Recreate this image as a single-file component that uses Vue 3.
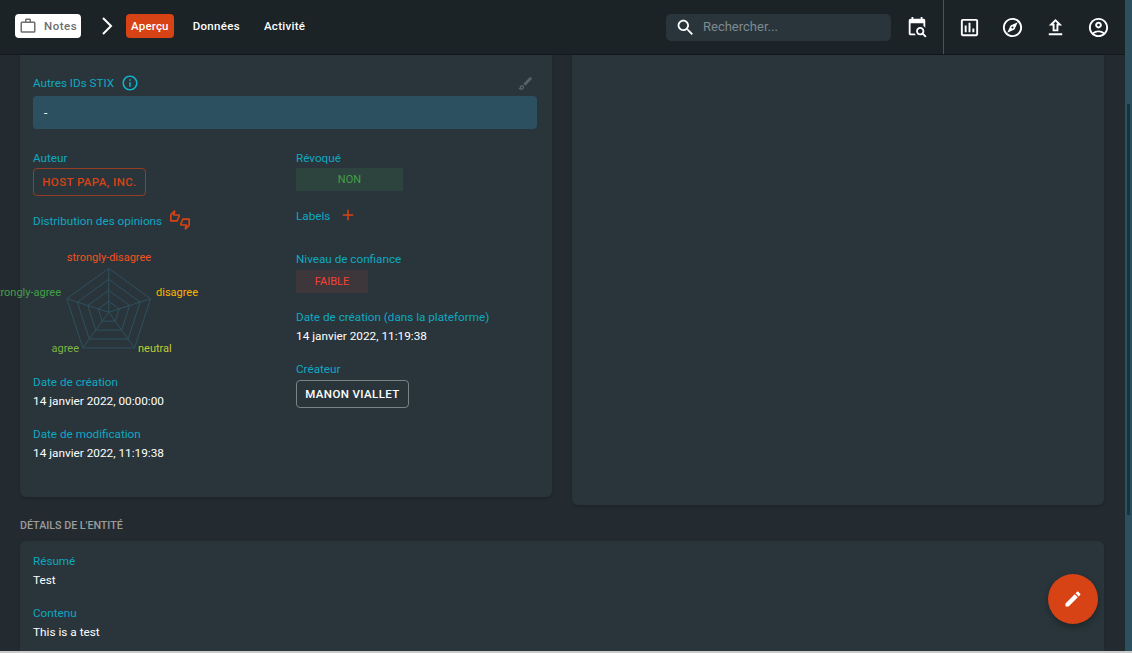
<script setup lang="ts">
const cx = 75.7
const cy = 72.3
const radius = 44

function point(axis: number, r: number): string {
  const angle = (-90 + axis * 72) * (Math.PI / 180)
  return `${(cx + r * Math.cos(angle)).toFixed(1)},${(cy + r * Math.sin(angle)).toFixed(1)}`
}

const rings = [0.25, 0.5, 0.75, 1].map((f) =>
  [0, 1, 2, 3, 4].map((a) => point(a, radius * f)).join(' ')
)
const spokes = [0, 1, 2, 3, 4].map((a) => point(a, radius).split(','))

const radarLabels = [
  { text: 'strongly-disagree', x: 76, y: 21, anchor: 'middle', color: '#f4511e' },
  { text: 'disagree', x: 123, y: 56, anchor: 'start', color: '#ffb300' },
  { text: 'neutral', x: 105, y: 112, anchor: 'start', color: '#c0ca33' },
  { text: 'agree', x: 46, y: 112, anchor: 'end', color: '#7cb342' },
  { text: 'strongly-agree', x: 28, y: 56, anchor: 'end', color: '#43a047' },
]
</script>

<template>
  <div class="page">
    <div class="viewport">
      <header class="topbar">
        <div class="crumb">
          <svg class="crumb-icon" viewBox="0 0 24 24"><path d="M14 6V4h-4v2h4zM4 8v11h16V8H4zm16-2c1.11 0 2 .89 2 2v11c0 1.11-.89 2-2 2H4c-1.11 0-2-.89-2-2l.01-11c0-1.11.88-2 1.99-2h4V4c0-1.11.89-2 2-2h4c1.11 0 2 .89 2 2v2h4z" /></svg>
          <span>Notes</span>
        </div>
        <svg class="chevron" viewBox="0 0 12 20"><polyline points="2,2 10,10 2,18" /></svg>
        <nav class="tabs">
          <a class="tab active">Aperçu</a>
          <a class="tab">Données</a>
          <a class="tab">Activité</a>
        </nav>
        <div class="search">
          <svg class="search-icon" viewBox="0 0 24 24"><path d="M15.5 14h-.79l-.28-.27C15.41 12.59 16 11.11 16 9.5 16 5.91 13.09 3 9.5 3S3 5.91 3 9.5 5.91 16 9.5 16c1.61 0 3.09-.59 4.23-1.57l.27.28v.79l5 4.99L20.49 19l-4.99-5zm-6 0C7.01 14 5 11.99 5 9.5S7.01 5 9.5 5 14 7.01 14 9.5 11.99 14 9.5 14z" /></svg>
          <input type="text" placeholder="Rechercher..." />
        </div>
        <svg class="bar-icon calendar" viewBox="0 0 24 24"><path d="M15.5 12C18 12 20 14 20 16.5C20 17.38 19.75 18.2 19.31 18.9L22.39 22L21 23.39L17.88 20.32C17.19 20.75 16.37 21 15.5 21C13 21 11 19 11 16.5C11 14 13 12 15.5 12M15.5 14C14.12 14 13 15.12 13 16.5C13 17.88 14.12 19 15.5 19C16.88 19 18 17.88 18 16.5C18 15.12 16.88 14 15.5 14M19 8H5V19H9.5C9.81 19.79 10.28 20.5 10.87 21H5C3.89 21 3 20.1 3 19V5C3 3.89 3.89 3 5 3H6V1H8V3H16V1H18V3H19C20.1 3 21 3.89 21 5V13.03C20.5 12.23 19.81 11.54 19 11V8Z" /></svg>
        <div class="bar-divider"></div>
        <div class="bar-actions">
          <svg class="bar-icon" viewBox="0 0 24 24"><path d="M19 3H5c-1.1 0-2 .9-2 2v14c0 1.1.9 2 2 2h14c1.1 0 2-.9 2-2V5c0-1.1-.9-2-2-2zm0 16H5V5h14v14zM7 10h2v7H7zm4-3h2v10h-2zm4 6h2v4h-2z" /></svg>
          <svg class="bar-icon" viewBox="0 0 24 24"><path d="M12 2C6.48 2 2 6.48 2 12s4.48 10 10 10 10-4.48 10-10S17.52 2 12 2zm0 18c-4.41 0-8-3.59-8-8s3.59-8 8-8 8 3.59 8 8-3.59 8-8 8zm-5.5-2.5l7.51-3.49L17.5 6.5 9.99 9.99 6.5 17.5zm5.5-6.6c.61 0 1.1.49 1.1 1.1s-.49 1.1-1.1 1.1-1.1-.49-1.1-1.1.49-1.1 1.1-1.1z" /></svg>
          <svg class="bar-icon" viewBox="0 0 24 24"><path d="M9 16h6v-6h4l-7-7-7 7h4zm3-10.17L14.17 8H13v6h-2V8H9.83L12 5.83zM5 18h14v2H5z" /></svg>
          <svg class="bar-icon" viewBox="0 0 24 24"><path d="M12 2C6.48 2 2 6.48 2 12s4.48 10 10 10 10-4.48 10-10S17.52 2 12 2zM7.35 18.5C8.66 17.56 10.26 17 12 17s3.34.56 4.65 1.5c-1.31.94-2.91 1.5-4.65 1.5s-3.34-.56-4.65-1.5zm10.79-1.38C16.45 15.8 14.32 15 12 15s-4.45.8-6.14 2.12C4.7 15.73 4 13.95 4 12c0-4.42 3.58-8 8-8s8 3.58 8 8c0 1.95-.7 3.73-1.86 5.12zM12 6c-1.93 0-3.5 1.57-3.5 3.5S10.07 13 12 13s3.5-1.57 3.5-3.5S13.93 6 12 6zm0 5c-.83 0-1.5-.67-1.5-1.5S11.17 8 12 8s1.5.67 1.5 1.5S12.83 11 12 11z" /></svg>
        </div>
      </header>

      <main class="content">
        <div class="overview">
          <section class="card card-left">
            <div class="label-row spread">
              <div class="label-row">
                <span class="label">Autres IDs STIX</span>
                <svg class="info" viewBox="0 0 24 24"><path d="M11 7h2v2h-2zm0 4h2v6h-2zm1-9C6.48 2 2 6.48 2 12s4.48 10 10 10 10-4.48 10-10S17.52 2 12 2zm0 18c-4.41 0-8-3.59-8-8s3.59-8 8-8 8 3.59 8 8-3.59 8-8 8z" /></svg>
              </div>
              <svg class="brush" viewBox="0 0 24 24"><path d="M7 16c.55 0 1 .45 1 1 0 1.1-.9 2-2 2-.17 0-.33-.02-.5-.05.31-.55.5-1.21.5-1.95 0-.55.45-1 1-1M18.67 3c-.26 0-.51.1-.71.29L9 12.25 11.75 15l8.96-8.96c.39-.39.39-1.02 0-1.41l-1.34-1.34c-.2-.2-.45-.29-.7-.29zM7 14c-1.66 0-3 1.34-3 3 0 1.31-1.16 2-2 2 .92 1.22 2.49 2 4 2 2.21 0 4-1.79 4-4 0-1.66-1.34-3-3-3z" /></svg>
            </div>
            <div class="stix-box">-</div>

            <div class="columns">
              <div class="column">
                <span class="label">Auteur</span>
                <span class="chip chip-author">HOST PAPA, INC.</span>

                <div class="label-row opinions">
                  <span class="label">Distribution des opinions</span>
                  <svg class="thumbs" viewBox="0 0 24 24"><path d="M12 6c0-.55-.45-1-1-1H5.82l.66-3.18.02-.23c0-.31-.13-.59-.33-.8L5.38 0 .44 4.94C.17 5.21 0 5.59 0 6v6.5c0 .83.67 1.5 1.5 1.5h6.75c.62 0 1.15-.38 1.38-.91l2.26-5.29c.07-.17.11-.36.11-.55V6zm-2 1.13L7.92 12H2V6.21l1.93-1.93L3.36 7H10v.13zM22.5 10h-6.75c-.62 0-1.15.38-1.38.91l-2.26 5.29c-.07.17-.11.36-.11.55V18c0 .55.45 1 1 1h5.18l-.66 3.18-.02.24c0 .31.13.59.33.8l.79.78 4.94-4.94c.27-.27.44-.65.44-1.06v-6.5c0-.83-.67-1.5-1.5-1.5zm-.5 7.79l-1.93 1.93.57-2.72H14v-.13L16.08 12H22v5.79z" /></svg>
                </div>

                <svg class="radar" width="180" height="135" viewBox="0 0 180 135">
                  <polygon v-for="(ring, i) in rings" :key="i" :points="ring" class="radar-line" />
                  <line
                    v-for="(s, i) in spokes"
                    :key="'s' + i"
                    :x1="cx"
                    :y1="cy"
                    :x2="s[0]"
                    :y2="s[1]"
                    class="radar-line"
                  />
                  <text
                    v-for="l in radarLabels"
                    :key="l.text"
                    :x="l.x"
                    :y="l.y"
                    :text-anchor="l.anchor"
                    :fill="l.color"
                    class="radar-text"
                  >{{ l.text }}</text>
                </svg>

                <span class="label">Date de création</span>
                <span class="value">14 janvier 2022, 00:00:00</span>
                <span class="label next">Date de modification</span>
                <span class="value">14 janvier 2022, 11:19:38</span>
              </div>

              <div class="column">
                <span class="label">Révoqué</span>
                <span class="chip chip-status chip-green">NON</span>

                <div class="label-row labels-row">
                  <span class="label">Labels</span>
                  <svg class="add" viewBox="0 0 24 24"><path d="M19 13h-6v6h-2v-6H5v-2h6V5h2v6h6v2z" /></svg>
                </div>

                <span class="label">Niveau de confiance</span>
                <span class="chip chip-status chip-red">FAIBLE</span>

                <span class="label after-chip">Date de création (dans la plateforme)</span>
                <span class="value">14 janvier 2022, 11:19:38</span>

                <span class="label next">Créateur</span>
                <span class="chip chip-creator">MANON VIALLET</span>
              </div>
            </div>
          </section>

          <section class="card card-right"></section>
        </div>

        <h2 class="section-title">Détails de l'entité</h2>
        <section class="card card-details">
          <span class="label">Résumé</span>
          <span class="value">Test</span>
          <span class="label next">Contenu</span>
          <span class="value">This is a test</span>
        </section>
      </main>

      <button type="button" class="fab" aria-label="Modifier">
        <svg viewBox="0 0 24 24"><path d="M3 17.25V21h3.75L17.81 9.94l-3.75-3.75L3 17.25zM20.71 7.04c.39-.39.39-1.02 0-1.41l-2.34-2.34c-.39-.39-1.02-.39-1.41 0l-1.83 1.83 3.75 3.75 1.83-1.83z" /></svg>
      </button>
    </div>

    <div class="scrollbar"><div class="scroll-thumb"></div></div>
  </div>
</template>

<style scoped>
.page {
  display: flex;
  height: 651px;
  overflow: hidden;
  background: #232b31;
  border-bottom: 2px solid #c9c9c9;
  font-family: Roboto, "Liberation Sans", sans-serif;
  font-size: 12px;
  color: #fff;
}

.viewport {
  position: relative;
  flex: 1;
  min-width: 0;
  overflow: hidden;
}

.topbar {
  display: flex;
  align-items: center;
  height: 54px;
  padding-left: 15px;
  background: #1b2327;
  border-bottom: 1px solid #12181b;
}

.crumb {
  display: flex;
  align-items: center;
  gap: 7px;
  width: 66px;
  height: 24px;
  box-sizing: border-box;
  margin-bottom: 2px;
  padding-left: 4px;
  background: #fff;
  border-radius: 4px;
  color: #6e6e6e;
  font-size: 11.5px;
  font-weight: 500;
  letter-spacing: 0.5px;
}

.crumb-icon {
  width: 18px;
  height: 18px;
  fill: #6e6e6e;
}

.chevron {
  width: 12px;
  height: 20px;
  margin-left: 20px;
  margin-bottom: 2px;
  fill: none;
  stroke: #fff;
  stroke-width: 2;
}

.tabs {
  display: flex;
  align-items: center;
  margin-left: 13px;
  margin-bottom: 2px;
}

.tab {
  display: flex;
  align-items: center;
  height: 24px;
  padding: 0 5px;
  margin-right: 14px;
  border-radius: 4px;
  font-size: 11.5px;
  font-weight: 500;
  letter-spacing: 0.3px;
}

.tab.active {
  background: #d84315;
  letter-spacing: 0.2px;
}

.search {
  display: flex;
  align-items: center;
  gap: 7px;
  width: 225px;
  height: 27px;
  box-sizing: border-box;
  margin-left: auto;
  padding-left: 9px;
  background: #29353b;
  border-radius: 5px;
}

.search-icon {
  width: 21px;
  height: 21px;
  flex: none;
  fill: #fff;
}

.search input {
  flex: 1;
  min-width: 0;
  margin-bottom: 2px;
  background: none;
  border: none;
  outline: none;
  padding: 0;
  color: #fff;
  font-family: inherit;
  font-size: 13px;
}

.search input::placeholder {
  color: #7f8a8f;
  opacity: 1;
}

.bar-icon {
  width: 23px;
  height: 23px;
  flex: none;
  fill: #fff;
}

.calendar {
  width: 22px;
  height: 22px;
  margin-left: 15px;
}

.bar-divider {
  align-self: stretch;
  width: 1px;
  margin-left: 15px;
  background: #4a5357;
}

.bar-actions {
  display: flex;
  align-items: center;
  gap: 20px;
  margin-left: 14px;
  margin-right: 15px;
}

.content {
  display: flex;
  flex-direction: column;
  padding: 0 21px 0 20px;
}

.overview {
  display: grid;
  grid-template-columns: 1fr 1fr;
  gap: 20px;
  align-items: start;
}

.card {
  background: #29353b;
  box-shadow: 0 2px 3px rgba(0, 0, 0, 0.15);
}

.card-left {
  height: 442px;
  box-sizing: border-box;
  padding: 20px 15px 0 13px;
  border-radius: 0 0 6px 6px;
}

.card-right {
  height: 450px;
  border-radius: 0 0 6px 6px;
}

.label-row {
  display: flex;
  align-items: center;
}

.spread {
  justify-content: space-between;
  height: 16px;
}

.label {
  display: block;
  height: 14px;
  color: #0fa8c2;
  font-size: 11.7px;
  line-height: 14px;
}

.value {
  display: block;
  height: 14px;
  margin-top: 5px;
  font-size: 11.8px;
  line-height: 14px;
}

.next {
  margin-top: 19px;
}

.info {
  width: 18px;
  height: 18px;
  margin-left: 7px;
  fill: #0fb5d0;
}

.brush {
  width: 17px;
  height: 17px;
  margin-right: 3px;
  fill: #596266;
}

.stix-box {
  height: 33px;
  box-sizing: border-box;
  margin-top: 5px;
  padding: 1px 0 0 11px;
  background: #2d5060;
  border-radius: 4px;
  line-height: 33px;
}

.columns {
  display: grid;
  grid-template-columns: 263px 1fr;
  margin-top: 22px;
}

.chip {
  display: flex;
  align-items: center;
  justify-content: center;
  box-sizing: border-box;
  font-size: 11.5px;
}

.chip-author,
.chip-creator {
  width: 113px;
  height: 28px;
  margin-top: 3px;
  border-radius: 4px;
  font-weight: 500;
  letter-spacing: 0.4px;
}

.chip-author {
  border: 1px solid rgba(216, 67, 21, 0.6);
  color: #d84315;
}

.chip-creator {
  margin-top: 4px;
  border: 1px solid #7a8286;
  color: #fff;
}

.chip-status {
  height: 23px;
  font-size: 11px;
}

.chip-green {
  width: 107px;
  margin-top: 3px;
  background: rgba(76, 175, 80, 0.12);
  color: #43a047;
}

.chip-red {
  width: 72px;
  margin-top: 4px;
  background: rgba(244, 67, 54, 0.1);
  color: #f44336;
}

.opinions {
  height: 14px;
  margin-top: 18px;
}

.thumbs {
  width: 20px;
  height: 20px;
  margin-left: 8px;
  margin-bottom: 2px;
  fill: #d84315;
}

.radar {
  display: block;
  overflow: visible;
  margin-top: 12px;
}

.radar-line {
  fill: none;
  stroke: #30505f;
  stroke-width: 1;
}

.radar-text {
  font-size: 11px;
}

.labels-row {
  height: 14px;
  margin-top: 18px;
  margin-bottom: 29px;
}

.add {
  width: 18px;
  height: 18px;
  margin-left: 9px;
  margin-bottom: 2px;
  fill: #d84315;
}

.after-chip {
  margin-top: 17px;
}

.section-title {
  margin: 14px 0 8px;
  height: 14px;
  color: #9c9c9c;
  font-size: 10.7px;
  font-weight: 500;
  line-height: 14px;
  text-transform: uppercase;
}

.card-details {
  padding: 13px 13px 20px;
  border-radius: 6px;
}

.fab {
  position: absolute;
  left: 1048px;
  top: 574px;
  display: flex;
  align-items: center;
  justify-content: center;
  width: 50px;
  height: 50px;
  padding: 0;
  border: none;
  border-radius: 50%;
  background: #d84315;
  box-shadow: 0 3px 6px rgba(0, 0, 0, 0.3);
}

.fab svg {
  width: 20px;
  height: 20px;
  fill: #fff;
}

.scrollbar {
  flex: none;
  width: 7px;
  padding-top: 104px;
  box-sizing: border-box;
  background: #2d5060;
}

.scroll-thumb {
  width: 3px;
  height: 411px;
  margin-left: 2px;
  background: #163342;
}
</style>
